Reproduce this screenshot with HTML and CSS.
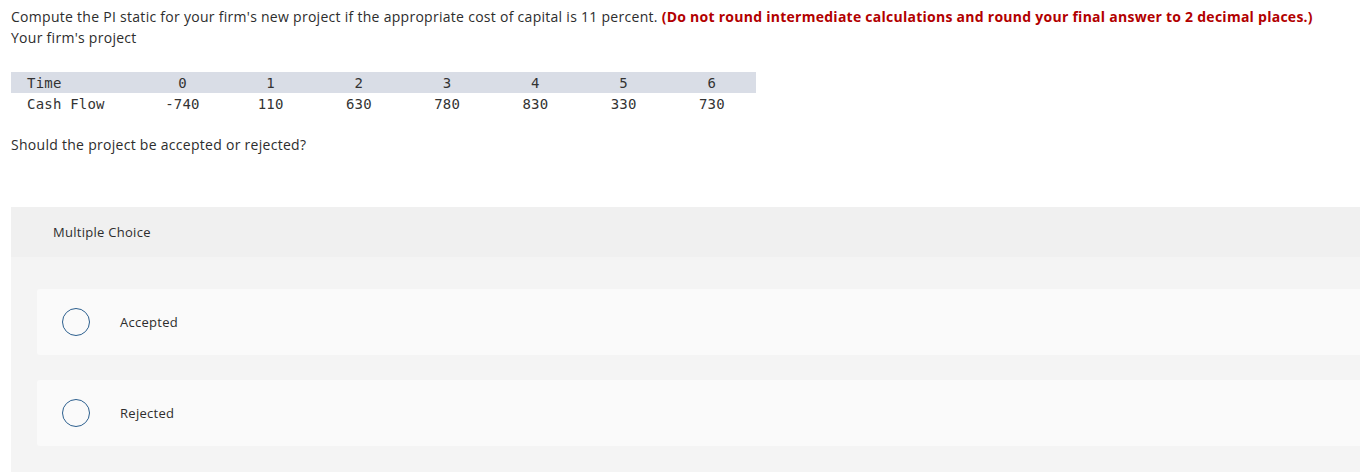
FILE: index.html
```html
<!DOCTYPE html>
<html>
<head>
<meta charset="utf-8">
<link rel="stylesheet" href="styles.css">
</head>
<body>
<div class="question">
  <p class="prompt">Compute the PI static for your firm's new project if the appropriate cost of capital is 11 percent. <strong class="note">(Do not round intermediate calculations and round your final answer to 2 decimal places.)</strong><br>Your firm's project</p>
  <table class="flows">
    <tr class="head"><td class="lbl">Time</td><td>0</td><td>1</td><td>2</td><td>3</td><td>4</td><td>5</td><td>6</td></tr>
    <tr><td class="lbl">Cash Flow</td><td>-740</td><td>110</td><td>630</td><td>780</td><td>830</td><td>330</td><td>730</td></tr>
  </table>
  <p class="ask">Should the project be accepted or rejected?</p>
</div>
<div class="mc">
  <div class="mc-head">Multiple Choice</div>
  <div class="mc-body">
    <div class="opt"><span class="radio"></span><span class="opt-text">Accepted</span></div>
    <div class="opt"><span class="radio"></span><span class="opt-text">Rejected</span></div>
  </div>
</div>
</body>
</html>
```
FILE: styles.css
```css
html { overflow: hidden; }
body {
  margin: 0;
  padding: 6px 0 0 11px;
  font-family: "Open Sans", sans-serif;
  font-size: 14px;
  letter-spacing: 0.28px;
  color: #2d2d2d;
  background: #fff;
}
.prompt {
  margin: 0;
  line-height: 21px;
}
.note { color: #b20000; font-weight: 700; letter-spacing: 0.26px; }
.flows {
  margin-top: 24px;
  border-collapse: collapse;
  width: 745px;
  font-family: "DejaVu Sans Mono", monospace;
  font-size: 14px;
  letter-spacing: 0.2px;
  color: #333;
}
.flows td {
  height: 21px;
  padding: 0;
  text-align: center;
  width: 88px;
}
.flows td.lbl {
  text-align: left;
  padding-left: 16px;
  width: 111px;
}
.flows .head td { background: #d9dde6; }
.ask { margin: 20px 0 0 0; line-height: 21px; }
.mc {
  margin-top: 52px;
  margin-right: -30px;
  background: #f4f4f4;
  padding-bottom: 30px;
}
.mc-head {
  background: #f0f0f0;
  height: 50px;
  display: flex;
  align-items: center;
  padding-left: 42px;
  font-size: 13px;
}
.mc-body {
  padding: 32px 0 0 26px;
  display: flex;
  flex-direction: column;
  gap: 25px;
}
.opt {
  background: #fafafa;
  border-radius: 3px;
  height: 66px;
  display: flex;
  align-items: center;
  padding-left: 25px;
}
.radio {
  width: 26px;
  height: 26px;
  border: 1.5px solid #2c5f8e;
  border-radius: 50%;
  flex: none;
}
.opt-text { margin-left: 30px; font-size: 13px; }
```
